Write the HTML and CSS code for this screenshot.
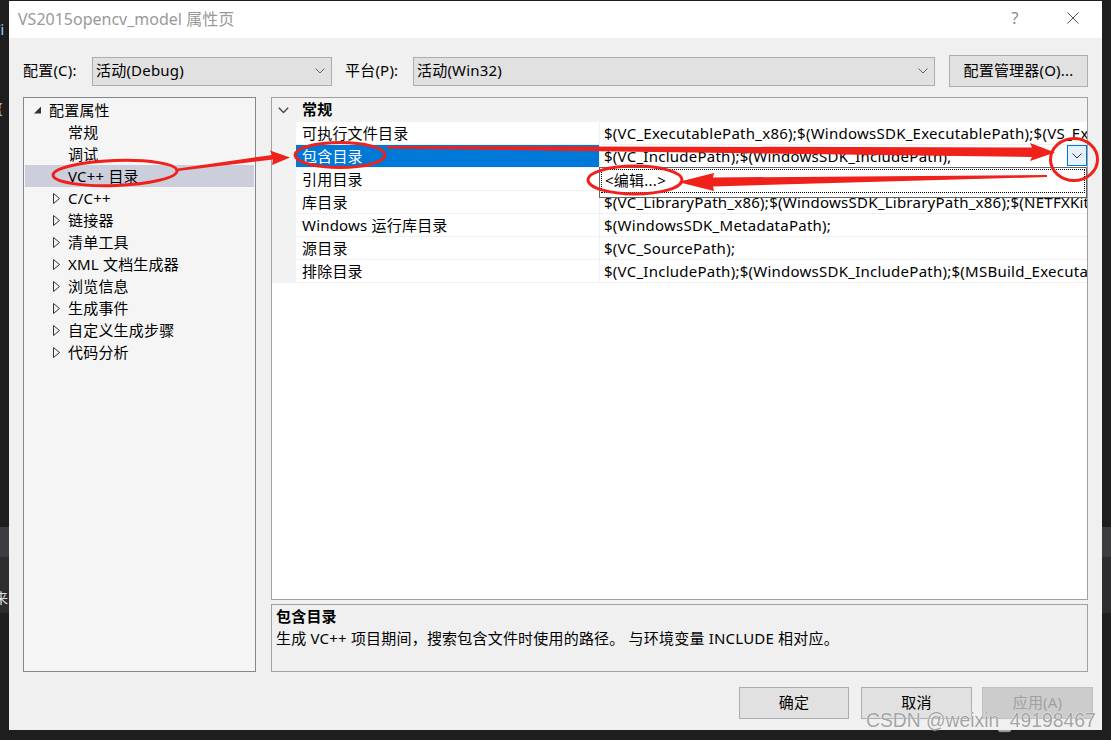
FILE: index.html
```html
<!DOCTYPE html>
<html lang="zh-CN">
<head>
<meta charset="utf-8">
<title>VS2015opencv_model 属性页</title>
<link rel="stylesheet" href="styles.css">
</head>
<body>
<div class="screen">
  <div class="strip strip-left">
    <div class="strip-top">
      <span class="frag frag-a">Vi</span>
      <span class="frag frag-b">{</span>
    </div>
    <div class="band-a"></div>
    <div class="band-b"><span class="frag frag-c">来</span></div>
    <div class="strip-rest"></div>
  </div>

  <div class="dialog">
    <div class="titlebar">
      <span class="title">VS2015opencv_model 属性页</span>
      <span class="cap cap-help">?</span>
      <span class="cap cap-close">
        <svg width="12" height="12" viewBox="0 0 12 12"><path d="M0.5 0.5 L11.5 11.5 M11.5 0.5 L0.5 11.5" stroke="#555" stroke-width="1" fill="none"/></svg>
      </span>
    </div>

    <div class="configrow">
      <span class="cfg-label l1">配置(C):</span>
      <div class="combo c1">
        <span>活动(Debug)</span>
        <svg class="chev" width="10" height="6" viewBox="0 0 10 6"><polyline points="0.5,0.5 5,5 9.5,0.5" fill="none" stroke="#606060" stroke-width="1"/></svg>
      </div>
      <span class="cfg-label l2">平台(P):</span>
      <div class="combo c2">
        <span>活动(Win32)</span>
        <svg class="chev" width="10" height="6" viewBox="0 0 10 6"><polyline points="0.5,0.5 5,5 9.5,0.5" fill="none" stroke="#606060" stroke-width="1"/></svg>
      </div>
      <button class="btn cfgmgr">配置管理器(O)...</button>
    </div>

    <div class="main">
      <div class="tree">
        <div class="tnode root">
          <span class="tw"><svg width="9" height="8" viewBox="0 0 9 8"><polygon points="8,0.5 8,7.5 1,7.5" fill="#333"/></svg></span>
          <span>配置属性</span>
        </div>
        <div class="tnode child"><span class="tw"></span><span>常规</span></div>
        <div class="tnode child"><span class="tw"></span><span>调试</span></div>
        <div class="tnode child selected"><span class="tw"></span><span>VC++ 目录</span></div>
        <div class="tnode child"><span class="tw"><svg class="tri" width="8" height="11" viewBox="0 0 8 11"><polygon points="0.5,0.5 6.5,5.5 0.5,10.5" fill="none" stroke="#333" stroke-width="1"/></svg></span><span>C/C++</span></div>
        <div class="tnode child"><span class="tw"><svg class="tri" width="8" height="11" viewBox="0 0 8 11"><polygon points="0.5,0.5 6.5,5.5 0.5,10.5" fill="none" stroke="#333" stroke-width="1"/></svg></span><span>链接器</span></div>
        <div class="tnode child"><span class="tw"><svg class="tri" width="8" height="11" viewBox="0 0 8 11"><polygon points="0.5,0.5 6.5,5.5 0.5,10.5" fill="none" stroke="#333" stroke-width="1"/></svg></span><span>清单工具</span></div>
        <div class="tnode child"><span class="tw"><svg class="tri" width="8" height="11" viewBox="0 0 8 11"><polygon points="0.5,0.5 6.5,5.5 0.5,10.5" fill="none" stroke="#333" stroke-width="1"/></svg></span><span>XML 文档生成器</span></div>
        <div class="tnode child"><span class="tw"><svg class="tri" width="8" height="11" viewBox="0 0 8 11"><polygon points="0.5,0.5 6.5,5.5 0.5,10.5" fill="none" stroke="#333" stroke-width="1"/></svg></span><span>浏览信息</span></div>
        <div class="tnode child"><span class="tw"><svg class="tri" width="8" height="11" viewBox="0 0 8 11"><polygon points="0.5,0.5 6.5,5.5 0.5,10.5" fill="none" stroke="#333" stroke-width="1"/></svg></span><span>生成事件</span></div>
        <div class="tnode child"><span class="tw"><svg class="tri" width="8" height="11" viewBox="0 0 8 11"><polygon points="0.5,0.5 6.5,5.5 0.5,10.5" fill="none" stroke="#333" stroke-width="1"/></svg></span><span>自定义生成步骤</span></div>
        <div class="tnode child"><span class="tw"><svg class="tri" width="8" height="11" viewBox="0 0 8 11"><polygon points="0.5,0.5 6.5,5.5 0.5,10.5" fill="none" stroke="#333" stroke-width="1"/></svg></span><span>代码分析</span></div>
      </div>

      <div class="rightcol">
        <div class="grid">
          <div class="ghead">
            <span class="gut"><svg width="11" height="7" viewBox="0 0 11 7"><polyline points="0.8,0.8 5.5,5.5 10.2,0.8" fill="none" stroke="#444" stroke-width="1.3"/></svg></span>
            <span class="gcat">常规</span>
          </div>
          <div class="grow">
            <span class="gut"></span>
            <span class="gname">可执行文件目录</span>
            <span class="gval">$(VC_ExecutablePath_x86);$(WindowsSDK_ExecutablePath);$(VS_ExecutablePath);$(MSBuild_ExecutablePath);$(SystemRoot)\SysWow64;$(FxCopDir);$(PATH);</span>
          </div>
          <div class="grow sel">
            <span class="gut"></span>
            <span class="gname">包含目录</span>
            <span class="gval">
              <span class="gtext">$(VC_IncludePath);$(WindowsSDK_IncludePath);</span>
              <span class="ddbtn"><svg width="10" height="6" viewBox="0 0 10 6"><polyline points="0.5,0.5 5,5 9.5,0.5" fill="none" stroke="#333" stroke-width="1"/></svg></span>
              <span class="popup"><span class="popitem">&lt;编辑...&gt;</span></span>
            </span>
          </div>
          <div class="grow">
            <span class="gut"></span>
            <span class="gname">引用目录</span>
            <span class="gval">$(VC_ReferencesPath_x86);</span>
          </div>
          <div class="grow">
            <span class="gut"></span>
            <span class="gname">库目录</span>
            <span class="gval">$(VC_LibraryPath_x86);$(WindowsSDK_LibraryPath_x86);$(NETFXKitsDir)Lib\um\x86</span>
          </div>
          <div class="grow">
            <span class="gut"></span>
            <span class="gname">Windows 运行库目录</span>
            <span class="gval">$(WindowsSDK_MetadataPath);</span>
          </div>
          <div class="grow">
            <span class="gut"></span>
            <span class="gname">源目录</span>
            <span class="gval">$(VC_SourcePath);</span>
          </div>
          <div class="grow">
            <span class="gut"></span>
            <span class="gname">排除目录</span>
            <span class="gval">$(VC_IncludePath);$(WindowsSDK_IncludePath);$(MSBuild_ExecutablePath);$(VC_LibraryPath_x86);</span>
          </div>
        </div>
        <div class="desc">
          <div class="desc-title">包含目录</div>
          <div class="desc-text">生成 VC++ 项目期间，搜索包含文件时使用的路径。 与环境变量 INCLUDE 相对应。</div>
        </div>
      </div>
    </div>

    <div class="footer">
      <button class="btn b-ok">确定</button>
      <button class="btn b-cancel">取消</button>
      <button class="btn b-apply" disabled>应用(A)</button>
    </div>
  </div>

  <div class="strip strip-right">
    <div class="strip-top"></div>
    <div class="band-a"></div>
    <div class="band-b"></div>
    <div class="strip-rest"></div>
  </div>

  <svg class="annot" width="1111" height="740" viewBox="0 0 1111 740">
    <g fill="none" stroke="#f0201a" stroke-width="3">
      <ellipse cx="115" cy="173" rx="62" ry="12.5" transform="rotate(-2 115 173)"/>
      <ellipse cx="340" cy="155" rx="45" ry="12.5"/>
      <ellipse cx="1074" cy="159.5" rx="23.5" ry="21"/>
      <ellipse cx="635" cy="180" rx="47" ry="14"/>
    </g>
    <g fill="#f0201a">
      <polygon points="178,168.5 272,155 270,150.5 290,157.5 272,165 273,159.5 178,171"/>
      <polygon points="387,146 1032,147.5 1030,143 1055,152.5 1030,161 1032,157 387,148.5"/>
      <polygon points="1047,175 713,177.5 714,173 678,182 714,191 713,186.5 1047,177"/>
    </g>
  </svg>

  <div class="watermark">CSDN @weixin_49198467</div>
</div>
</body>
</html>
```

FILE: styles.css
```css
html, body {
  margin: 0;
  padding: 0;
}

body {
  background: #1e1e1e;
  font-family: "Noto Sans", "Noto Sans CJK SC", sans-serif;
  font-size: 15px;
  letter-spacing: 0.2px;
  color: #000;
}

.screen {
  position: relative;
  display: flex;
  width: 1111px;
  height: 740px;
  overflow: hidden;
}

/* background editor window strips */
.strip {
  width: 9px;
  flex: none;
  display: flex;
  flex-direction: column;
  overflow: hidden;
  background: #1e1e1e;
}

.strip-top {
  height: 527px;
  display: flex;
  flex-direction: column;
}

.band-a {
  height: 30px;
  background: #3c3c41;
}

.band-b {
  height: 56px;
  background: #2d2d30;
}

.strip-rest {
  flex: 1;
}

.frag {
  display: block;
  color: #c8c8c8;
  font-size: 14px;
  line-height: 16px;
  white-space: nowrap;
}

.frag-a {
  margin-top: 22px;
  margin-left: -8px;
  color: #9cdcfe;
}

.frag-b {
  margin-top: 62px;
  margin-left: -3px;
}

.frag-c {
  margin-top: 33px;
  margin-left: -6px;
  color: #e0e0e0;
}

/* dialog */
.dialog {
  width: 1093px;
  height: 729px;
  margin-top: 1px;
  flex: none;
  background: #f0f0f0;
  display: flex;
  flex-direction: column;
}

.titlebar {
  height: 37px;
  flex: none;
  background: #fff;
  display: flex;
  align-items: center;
}

.title {
  flex: 1;
  padding-left: 9px;
  padding-bottom: 3px;
  color: #999;
  font-size: 16px;
  letter-spacing: 0;
}

.cap {
  width: 58px;
  height: 37px;
  box-sizing: border-box;
  padding-bottom: 3px;
  display: flex;
  align-items: center;
  justify-content: center;
  color: #888;
  font-size: 16px;
}

.cap-close svg {
  display: block;
}

/* configuration row */
.configrow {
  height: 32px;
  margin-top: 17px;
  padding: 0 14px;
  flex: none;
  display: flex;
  align-items: center;
}

.cfg-label {
  flex: none;
  line-height: 20px;
  padding-bottom: 3px;
}

.l1 {
  width: 69px;
}

.l2 {
  width: 68px;
  margin-left: 13px;
}

.combo {
  height: 29px;
  box-sizing: border-box;
  border: 1px solid #adadad;
  background: #e1e1e1;
  display: flex;
  align-items: center;
  justify-content: space-between;
  padding: 0 6px 3px 3px;
  flex: none;
}

.c1 {
  width: 240px;
}

.c2 {
  width: 522px;
}

.combo .chev {
  margin-top: 3px;
}

.chev {
  display: block;
}

.btn {
  height: 32px;
  box-sizing: border-box;
  border: 1px solid #adadad;
  background: #e1e1e1;
  font-family: inherit;
  font-size: 15px;
  letter-spacing: 0.2px;
  color: #000;
  padding: 0 0 3px 0;
  flex: none;
}

.cfgmgr {
  width: 139px;
  margin-left: 14px;
}

/* main area */
.main {
  height: 575px;
  margin-top: 10px;
  padding: 0 14px;
  flex: none;
  display: flex;
  gap: 15px;
}

.tree {
  width: 233px;
  box-sizing: border-box;
  border: 1px solid #828790;
  background: #f5f5f5;
  padding-top: 1px;
  flex: none;
}

.tnode {
  height: 22px;
  line-height: 22px;
  display: flex;
  align-items: center;
  white-space: nowrap;
}

.tnode.root {
  padding-left: 9px;
}

.tnode.root .tw {
  width: 16px;
}

.tnode.child {
  padding-left: 29px;
}

.tnode.child .tw {
  width: 15px;
}

.tw {
  flex: none;
  display: flex;
  align-items: center;
}

.tw svg {
  display: block;
}

.tnode.selected {
  background: #cccedb;
  margin: 0 1px;
  padding-left: 28px;
}

.rightcol {
  width: 817px;
  flex: none;
  display: flex;
  flex-direction: column;
  gap: 4px;
}

.grid {
  height: 503px;
  box-sizing: border-box;
  border: 1px solid #a0a0a0;
  background: #fff;
  flex: none;
}

.ghead {
  height: 24px;
  background: #f2f2f2;
  display: flex;
  align-items: center;
}

.gut {
  width: 24px;
  align-self: stretch;
  flex: none;
  background: #f2f2f2;
  display: flex;
  align-items: center;
  justify-content: center;
}

.gut svg {
  display: block;
  margin-left: -2px;
}

.gcat {
  padding-left: 6px;
  font-weight: bold;
  line-height: 22px;
  padding-bottom: 2px;
}

.grow {
  height: 23px;
  display: flex;
}

.gname {
  width: 304px;
  box-sizing: border-box;
  flex: none;
  padding-left: 6px;
  line-height: 22px;
  border-bottom: 1px solid #f0f0f0;
  border-right: 1px solid #f0f0f0;
  white-space: nowrap;
  overflow: hidden;
}

.gval {
  flex: 1;
  min-width: 0;
  box-sizing: border-box;
  padding-left: 4px;
  line-height: 22px;
  letter-spacing: 0.25px;
  border-bottom: 1px solid #f0f0f0;
  white-space: nowrap;
  overflow: hidden;
}

.grow.sel .gname {
  background: #0078d7;
  color: #fff;
}

.grow.sel .gval {
  position: relative;
  overflow: visible;
  display: flex;
  align-items: flex-start;
}

.gtext {
  flex: 1;
  overflow: hidden;
}

.ddbtn {
  width: 20px;
  height: 21px;
  box-sizing: border-box;
  border: 1px solid #0078d7;
  background: #e5f1fb;
  display: flex;
  align-items: center;
  justify-content: center;
  flex: none;
}

.ddbtn svg {
  display: block;
}

.popup {
  position: absolute;
  top: 22px;
  left: -1px;
  right: 0;
  height: 31px;
  box-sizing: border-box;
  border: 1px solid #646464;
  background: #fff;
  padding: 1px;
  z-index: 2;
}

.popitem {
  display: block;
  height: 24px;
  box-sizing: border-box;
  border: 1px dotted #000;
  padding-left: 3px;
  line-height: 21px;
}

.desc {
  height: 68px;
  box-sizing: border-box;
  border: 1px solid #a0a0a0;
  background: #f0f0f0;
  padding: 0 0 0 4px;
  flex: none;
}

.desc-title {
  font-weight: bold;
  line-height: 22px;
}

.desc-text {
  line-height: 22px;
}

/* footer */
.footer {
  margin-top: 15px;
  padding-right: 9px;
  display: flex;
  justify-content: flex-end;
  flex: none;
}

.b-ok {
  width: 110px;
}

.b-cancel {
  width: 111px;
  margin-left: 12px;
}

.b-apply {
  width: 111px;
  margin-left: 10px;
  background: #cccccc;
  border-color: #bfbfbf;
  color: #a0a0a0;
}

/* overlays */
.annot {
  position: absolute;
  left: 0;
  top: 0;
  pointer-events: none;
  z-index: 5;
}

.watermark {
  position: absolute;
  left: 866px;
  top: 709px;
  font-family: "Liberation Sans", Arial, sans-serif;
  font-size: 19.3px;
  letter-spacing: 0;
  line-height: 24px;
  color: #a3a3a3;
  text-shadow: 0 0 1px #fff, 0 0 1px #fff;
  white-space: nowrap;
  z-index: 6;
}
```
